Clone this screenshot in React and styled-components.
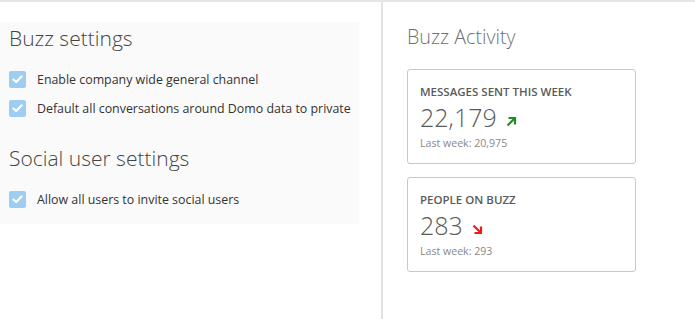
import React from 'react';
import styled, {createGlobalStyle} from 'styled-components';

const GlobalStyle = createGlobalStyle`
  html, body {
    margin: 0;
    padding: 0;
    background: #fff;
    font-family: "Open Sans", "Noto Sans", sans-serif;
  }
`

const Page = styled.div`
  display: flex;
  width: 695px;
  height: 319px;
  box-sizing: border-box;
  border-top: 2px solid #e6e6e6;
  overflow: hidden;
`

const LeftColumn = styled.div`
  width: 381px;
  flex: none;
  padding-top: 20px;
`

const SettingsPanel = styled.div`
  width: 359px;
  height: 202px;
  box-sizing: border-box;
  background: #fafafa;
  padding: 2px 0 0 9px;
`

const Heading = styled.h2`
  margin: 0;
  margin-top: ${p => p.$top || 0}px;
  font-family: "Open Sans Light", "Open Sans", sans-serif;
  font-size: 21px;
  font-weight: 300;
  line-height: 28px;
  color: #444;
`

const CheckRow = styled.label`
  display: flex;
  align-items: center;
  height: 17px;
  margin-top: ${p => p.$top || 12}px;
  font-size: 12.4px;
  color: #333;
  white-space: nowrap;
`

const Box = styled.span`
  width: 17px;
  height: 17px;
  flex: none;
  border-radius: 2px;
  background: #9dcdf1;
  display: flex;
  align-items: center;
  justify-content: center;
  margin-right: 11px;
`

const RightColumn = styled.div`
  flex: 1;
  border-left: 2px solid #e3e3e3;
  padding: 22px 0 0 24px;
`

const SubHeading = styled.h3`
  margin: 0 0 19px;
  font-family: "Open Sans Light", "Open Sans", sans-serif;
  font-size: 19.7px;
  font-weight: 300;
  line-height: 26px;
  color: #707070;
`

const Card = styled.div`
  width: 229px;
  height: 95px;
  box-sizing: border-box;
  border: 1px solid #c8c8c8;
  border-radius: 3px;
  padding: 14px 12px 0;
  margin-bottom: 13px;
`

const CardLabel = styled.div`
  font-size: 11.5px;
  font-weight: 600;
  color: #5a5a5a;
  line-height: 15px;
`

const ValueRow = styled.div`
  display: flex;
  align-items: flex-start;
  margin-top: 2px;
  font-family: "Open Sans Light", "Open Sans", sans-serif;
  font-size: 25px;
  font-weight: 300;
  color: #5a5a5a;
  line-height: 32px;
`

const Arrow = styled.svg`
  margin-left: 9px;
  margin-top: 15px;
`

const LastWeek = styled.div`
  font-size: 10.6px;
  color: #888;
  line-height: 14px;
  margin-top: 3px;
`

function Check({children, top}) {
  return (
    <CheckRow $top={top}>
      <Box>
        <svg width="11" height="9" viewBox="0 0 11 9">
          <path d="M1.5 4.5 L4.2 7 L9.5 1.5" fill="none" stroke="#fff" strokeWidth="2.2" strokeLinecap="round" strokeLinejoin="round"/>
        </svg>
      </Box>
      {children}
    </CheckRow>
  )
}

function StatCard({label, value, last, up}) {
  const color = up ? '#1f8f1f' : '#ee1c1c';
  return (
    <Card>
      <CardLabel>{label}</CardLabel>
      <ValueRow>
        {value}
        <Arrow width="11" height="11" viewBox="0 0 11 11">
          {up ? (
            <path d="M1.5 9.5 L8.5 2.5 M2.5 2 H9 V8.5" fill="none" stroke={color} strokeWidth="2.2"/>
          ) : (
            <path d="M1.5 1.5 L8.5 8.5 M2.5 9 H9 V2.5" fill="none" stroke={color} strokeWidth="2.2"/>
          )}
        </Arrow>
      </ValueRow>
      <LastWeek>Last week: {last}</LastWeek>
    </Card>
  )
}

export default function App() {
  return (
    <Page>
      <GlobalStyle/>
      <LeftColumn>
        <SettingsPanel>
          <Heading>Buzz settings</Heading>
          <Check top={19}>Enable company wide general channel</Check>
          <Check>Default all conversations around Domo data to private</Check>
          <Heading $top={27}>Social user settings</Heading>
          <Check top={19}>Allow all users to invite social users</Check>
        </SettingsPanel>
      </LeftColumn>
      <RightColumn>
        <SubHeading>Buzz Activity</SubHeading>
        <StatCard label="MESSAGES SENT THIS WEEK" value="22,179" last="20,975" up/>
        <StatCard label="PEOPLE ON BUZZ" value="283" last="293"/>
      </RightColumn>
    </Page>
  )
}
